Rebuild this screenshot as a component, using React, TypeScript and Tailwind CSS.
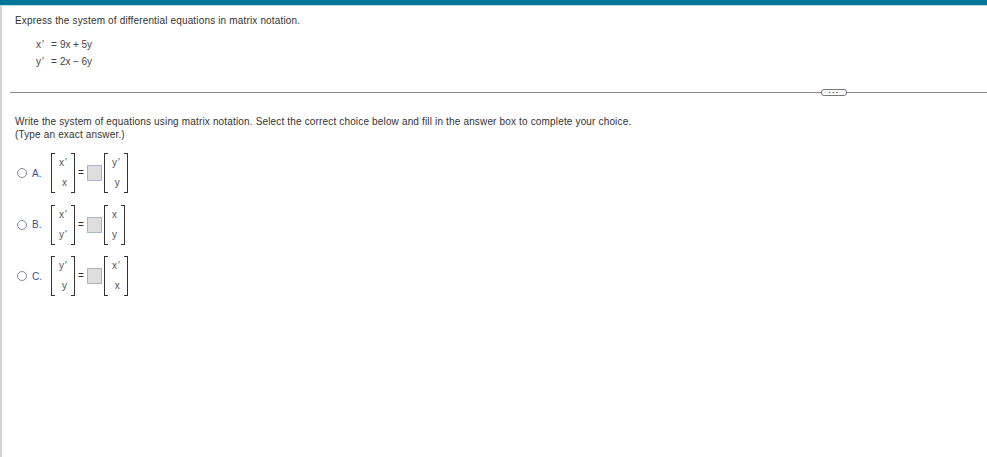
const CHOICES = [
  { label: "A.", left: ["x′", "x"], right: ["y′", "y"] },
  { label: "B.", left: ["x′", "y′"], right: ["x", "y"] },
  { label: "C.", left: ["y′", "y"], right: ["x′", "x"] },
];

function Matrix({ rows }: Readonly<{ rows: string[] }>) {
  return (
    <div className="flex h-10 items-stretch">
      <div className="w-[4px] border-y border-l border-[#333]" />
      <div className="flex flex-col items-end justify-between py-[2px] pl-1 pr-[3px] text-[10px] leading-[16px] tracking-[1px] text-[#555]">
        {rows.map((r) => (
          <span key={r}>{r}</span>
        ))}
      </div>
      <div className="w-[4px] border-y border-r border-[#333]" />
    </div>
  );
}

export default function App() {
  return (
    <div className="h-[457px] w-[987px] overflow-hidden bg-white font-['Liberation_Sans',sans-serif] text-[#333]">
      <div className="h-[5px] bg-[#00759c]" />
      <div className="h-px bg-[#bcdce6]" />
      <div className="flex h-[451px] flex-col border-l-2 border-[#d4d4d4]">
        <p className="ml-[13px] mt-[8px] text-[10px] leading-[13px] tracking-[0.16px]">
          Express the system of differential equations in matrix notation.
        </p>
        <div className="ml-[34px] mt-[9px] text-[10px] leading-[17px] text-[#444]">
          <div className="flex">
            <span className="w-[15px] tracking-[1px]">x′</span>
            <span className="w-[9px]">=</span>
            <span className="tracking-[-0.1px]">9x + 5y</span>
          </div>
          <div className="flex">
            <span className="w-[15px] tracking-[1px]">y′</span>
            <span className="w-[9px]">=</span>
            <span className="tracking-[-0.1px]">2x − 6y</span>
          </div>
        </div>
        <div className="relative ml-[8px] mt-[22px] h-px bg-[#8a8a8a]">
          <div className="absolute left-[811px] top-[-3px] flex h-[7px] w-[26px] items-center justify-center rounded-[3px] border border-[#777] bg-white text-[8px] font-bold leading-none tracking-[1px] text-[#333]">
            ···
          </div>
        </div>
        <p className="ml-[13px] mt-[22px] text-[10px] leading-[13px] tracking-[0.16px]">
          Write the system of equations using matrix notation. Select the correct choice below and fill in the answer box to complete your choice.
        </p>
        <p className="ml-[13px] text-[10px] leading-[13px] tracking-[0.16px]">(Type an exact answer.)</p>
        <div className="ml-[15px] mt-[12px] flex flex-col gap-[11.5px]">
          {CHOICES.map((c) => (
            <div key={c.label} className="flex items-center">
              <span className="h-[10px] w-[10px] rounded-full border-[1.5px] border-[#7f87b5]" />
              <span className="ml-[5px] w-[19px] text-[10px] font-medium text-[#3d4a8f]">{c.label}</span>
              <Matrix rows={c.left} />
              <span className="ml-[3px] w-[9px] text-[10px] leading-none text-[#333]">=</span>
              <span className="h-4 w-[15px] border border-[#a9b4cf] bg-[#dedede]" />
              <span className="w-[2px]" />
              <Matrix rows={c.right} />
            </div>
          ))}
        </div>
      </div>
    </div>
  );
}
